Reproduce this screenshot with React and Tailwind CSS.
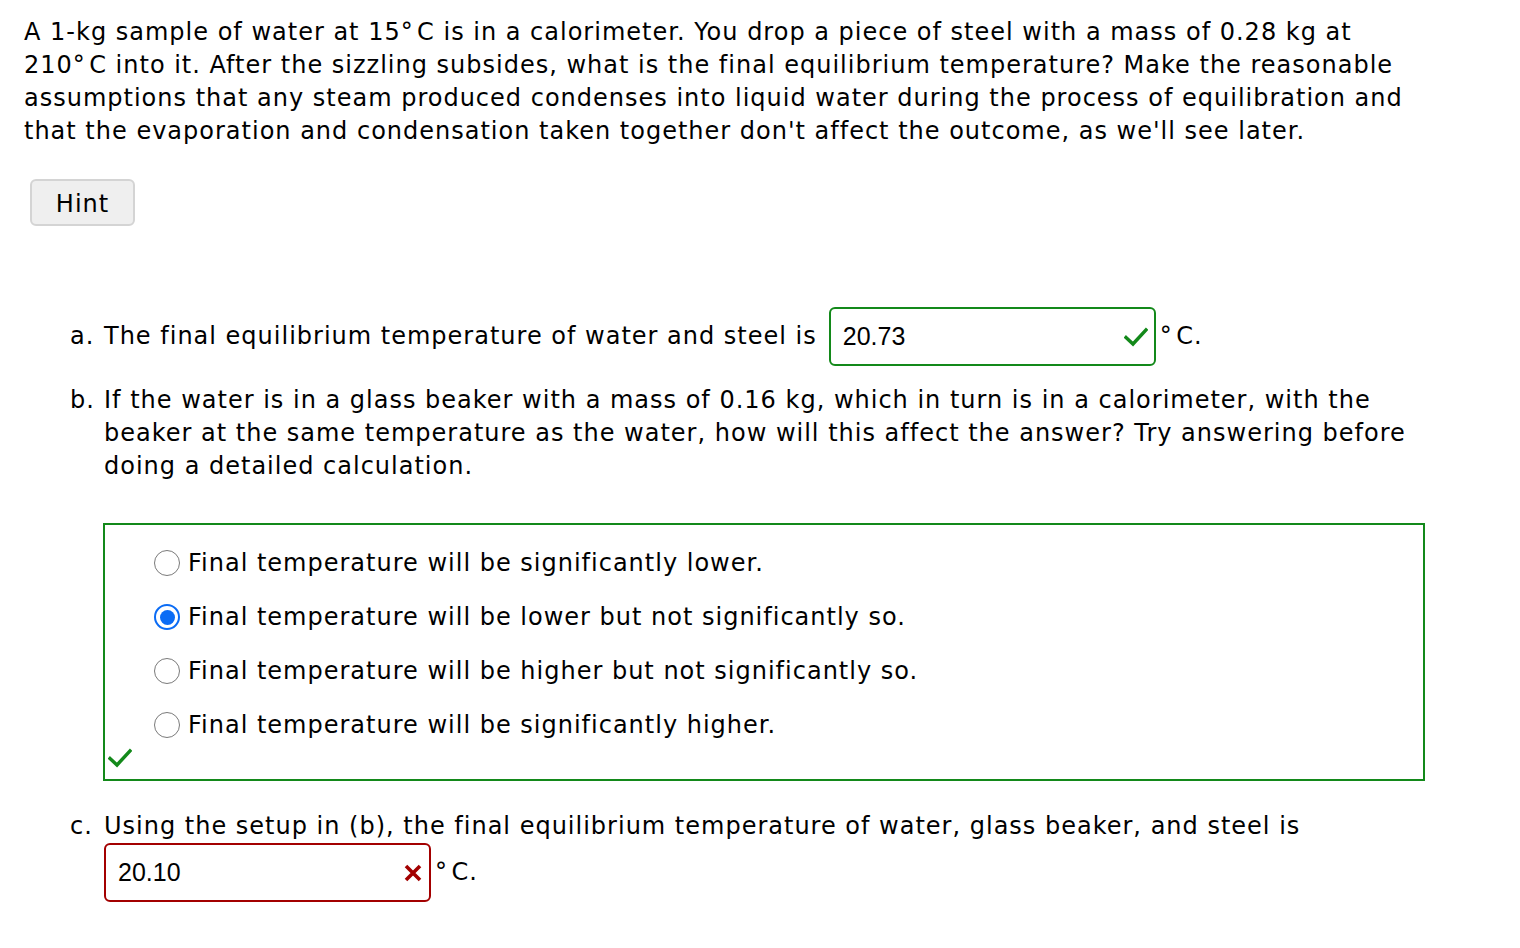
import { useState } from 'react'

const OPTIONS = [
  'Final temperature will be significantly lower.',
  'Final temperature will be lower but not significantly so.',
  'Final temperature will be higher but not significantly so.',
  'Final temperature will be significantly higher.',
]

function Check({ className }) {
  return (
    <svg viewBox="0 0 24 20" className={className} fill="none">
      <path d="M2 10.5 L9 17 L22 3" stroke="#13891a" strokeWidth="3.4" strokeLinecap="square" />
    </svg>
  )
}

function Cross({ className }) {
  return (
    <svg viewBox="0 0 20 20" className={className} fill="none">
      <path d="M3 3 L17 17 M17 3 L3 17" stroke="#a30000" strokeWidth="3.6" />
    </svg>
  )
}

function AnswerBox({ value, correct }) {
  return (
    <span
      className={`inline-flex items-center align-middle shrink-0 w-[327px] h-[59px] rounded-[6px] border-2 pl-[12px] pr-[6px] ${
        correct ? 'border-[#13891a]' : 'border-[#a30000]'
      }`}
    >
      <span className="flex-1 text-[25px] tracking-normal text-black font-['Liberation_Sans',Arial,sans-serif]">{value}</span>
      {correct ? <Check className="w-[24px] h-[20px]" /> : <Cross className="w-[20px] h-[20px]" />}
    </span>
  )
}

export default function App() {
  const [choice, setChoice] = useState(1)

  return (
    <div className="min-h-screen bg-white text-black font-['DejaVu_Sans',sans-serif] text-[24px] tracking-[1px] leading-[33px] pl-[24px] pt-[16px]">
      <p className="w-[1385px]">
        A 1-kg sample of water at 15°&#8202;C is in a calorimeter. You drop a piece of steel with a mass of 0.28 kg at
        210°&#8202;C into it. After the sizzling subsides, what is the final equilibrium temperature? Make the reasonable
        assumptions that any steam produced condenses into liquid water during the process of equilibration and
        that the evaporation and condensation taken together don't affect the outcome, as we'll see later.
      </p>

      <button
        type="button"
        className="mt-[31px] ml-[6px] w-[105px] h-[47px] pt-[4px] rounded-[6px] border-2 border-[#d4d4d4] bg-[#efefef] text-[24px] tracking-[1px]"
      >
        Hint
      </button>

      <div className="mt-[81px] ml-[46px] w-[1356px]">
        <div className="flex items-center">
          <span className="w-[34px] shrink-0">a.</span>
          <span className="mr-[12px]">The final equilibrium temperature of water and steel is</span>
          <AnswerBox value="20.73" correct />
          <span className="ml-[4px]">°&#8202;C.</span>
        </div>

        <div className="flex mt-[18px]">
          <span className="w-[34px] shrink-0">b.</span>
          <div className="flex-1">
            <p>
              If the water is in a glass beaker with a mass of 0.16 kg, which in turn is in a calorimeter, with the
              beaker at the same temperature as the water, how will this affect the answer? Try answering before
              doing a detailed calculation.
            </p>
            <div className="mt-[40px] -ml-[1px] w-[1322px] h-[258px] border-2 border-[#13891a] flex flex-col pt-[11px] pl-[49px]">
              {OPTIONS.map((opt, i) => (
                <label key={opt} className="flex items-center shrink-0 h-[54px] cursor-pointer">
                  <span
                    className={`w-[26px] h-[26px] rounded-full shrink-0 flex items-center justify-center ${
                      choice === i ? 'border-[2.5px] border-[#0b6cf5]' : 'border-[1.5px] border-[#7a7a7a]'
                    }`}
                    onClick={() => setChoice(i)}
                  >
                    {choice === i && <span className="w-[15px] h-[15px] rounded-full bg-[#0b6cf5]" />}
                  </span>
                  <span className="ml-[8px]">{opt}</span>
                </label>
              ))}
              <Check className="-ml-[46px] -mt-[4px] w-[24px] h-[20px] shrink-0" />
            </div>
          </div>
        </div>

        <div className="flex mt-[29px]">
          <span className="w-[34px] shrink-0">c.</span>
          <div className="flex-1">
            <p>Using the setup in (b), the final equilibrium temperature of water, glass beaker, and steel is</p>
            <div className="flex items-center">
              <AnswerBox value="20.10" correct={false} />
              <span className="ml-[4px]">°&#8202;C.</span>
            </div>
          </div>
        </div>
      </div>
    </div>
  )
}
